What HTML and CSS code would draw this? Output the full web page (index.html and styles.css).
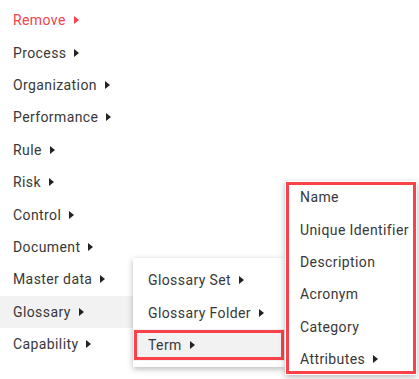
FILE: index.html
```html
<!DOCTYPE html>
<html>
<head>
<meta charset="utf-8">
<link rel="stylesheet" href="styles.css">
</head>
<body>
<div class="stage">
  <ul class="menu main">
    <li class="item danger">Remove<span class="caret"></span></li>
    <li class="item">Process<span class="caret"></span></li>
    <li class="item">Organization<span class="caret"></span></li>
    <li class="item">Performance<span class="caret"></span></li>
    <li class="item">Rule<span class="caret"></span></li>
    <li class="item">Risk<span class="caret"></span></li>
    <li class="item">Control<span class="caret"></span></li>
    <li class="item">Document<span class="caret"></span></li>
    <li class="item">Master data<span class="caret"></span></li>
    <li class="item active">Glossary<span class="caret"></span></li>
    <li class="item">Capability<span class="caret"></span></li>
  </ul>
  <ul class="menu sub glossary">
    <li class="item">Glossary Set<span class="caret"></span></li>
    <li class="item">Glossary Folder<span class="caret"></span></li>
    <li class="item active marked">Term<span class="caret"></span></li>
  </ul>
  <ul class="menu sub term">
    <li class="item">Name</li>
    <li class="item">Unique Identifier</li>
    <li class="item">Description</li>
    <li class="item">Acronym</li>
    <li class="item">Category</li>
    <li class="item">Attributes<span class="caret"></span></li>
  </ul>
</div>
</body>
</html>
```

FILE: styles.css
```css
html, body {
  margin: 0;
  padding: 0;
  background: #ffffff;
}
body {
  font-family: Roboto, "Liberation Sans", Arial, sans-serif;
  font-size: 14px;
  letter-spacing: 0.4px;
  color: #383838;
}
.stage {
  position: relative;
  width: 419px;
  height: 379px;
  overflow: hidden;
}
.menu {
  list-style: none;
  margin: 0;
  padding: 0;
  background: #ffffff;
}
.item {
  display: flex;
  align-items: center;
  height: 32.4px;
  white-space: nowrap;
}
.caret {
  display: inline-block;
  width: 0;
  height: 0;
  margin-left: 8px;
  border-left: 5px solid #222222;
  border-top: 4px solid transparent;
  border-bottom: 4px solid transparent;
}
.main {
  width: 133px;
  padding: 4px 0;
}
.main .item {
  padding-left: 13px;
}
.danger {
  color: #f5424b;
}
.danger .caret {
  border-left-color: #f5424b;
}
.active {
  background: #f2f2f2;
}
.sub {
  position: absolute;
  box-shadow: 0 2px 6px rgba(0, 0, 0, 0.28);
}
.sub .item {
  padding-left: 15px;
}
.glossary {
  left: 133px;
  top: 258px;
  width: 152px;
  padding: 6px 0;
}
.marked {
  outline: 3px solid #f9424a;
  outline-offset: -4px;
}
.term {
  left: 285px;
  top: 181px;
  width: 132px;
  outline: 3px solid #f9424a;
  outline-offset: -4px;
}
```
